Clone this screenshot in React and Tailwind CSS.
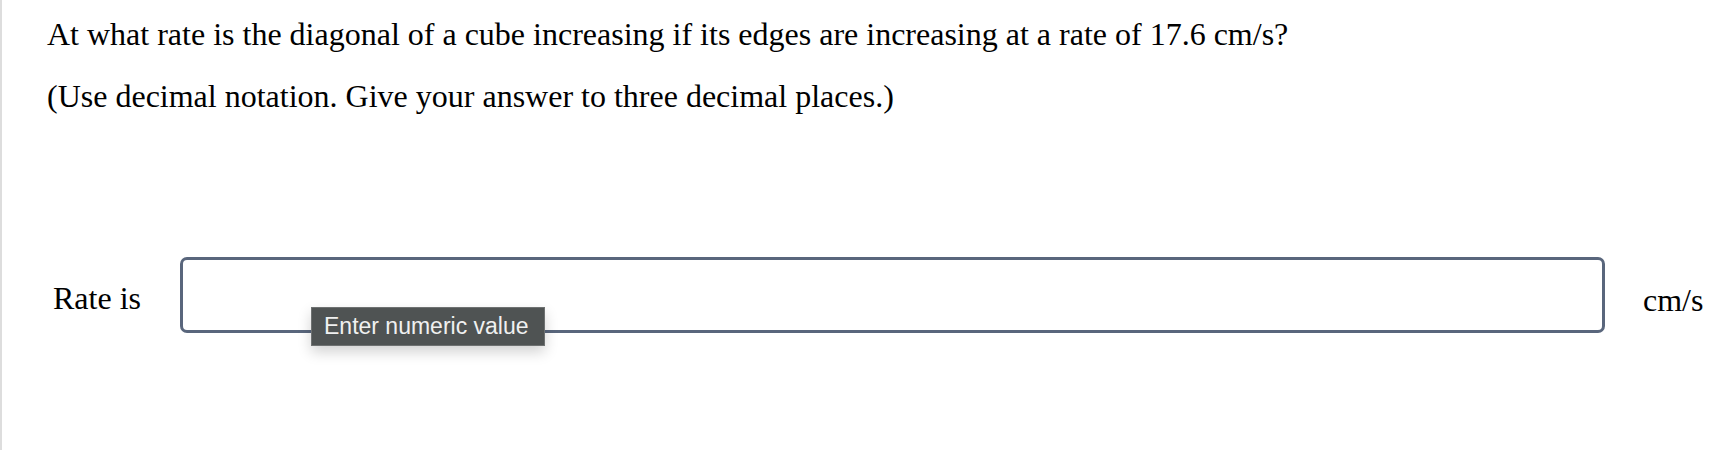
import React, { useState } from 'react';

const App = () => {
    const [rate, setRate] = useState('');

    return (
        <div className="min-h-[450px] w-[1730px] bg-white border-l-2 border-[#dddddd] font-['Liberation_Serif',serif] text-black">
            <div className="pl-[45px]">
                <p className="pt-[16px] text-[32px] leading-[1.15]">
                    At what rate is the diagonal of a cube increasing if its edges are increasing at a rate of 17.6 cm/s?
                </p>
                <p className="mt-[25px] text-[32px] leading-[1.15]">
                    (Use decimal notation. Give your answer to three decimal places.)
                </p>
            </div>

            <div className="mt-[142px] flex items-start pl-[51px]">
                <label className="w-[127px] shrink-0 pt-[23px] text-[32px] leading-[1.15]">Rate is</label>
                <div className="relative shrink-0">
                    <input
                        type="text"
                        value={rate}
                        onChange={(e) => setRate(e.target.value)}
                        className="block w-[1425px] h-[76px] rounded-[7px] border-[3px] border-[#59667c] bg-white px-3 text-[32px] focus:outline-none"
                    />
                    <div className="absolute left-[131px] top-[50px] w-[234px] h-[39px] border border-[#6e7171] bg-[#4f5353] pl-[12px] font-['Liberation_Sans',Arial,sans-serif] text-[23px] leading-[37px] text-[#f0f0f0] shadow-[0_6px_14px_rgba(0,0,0,0.18)]">
                        Enter numeric value
                    </div>
                </div>
                <span className="ml-[38px] pt-[25px] text-[32px] leading-[1.15]">cm/s</span>
            </div>
        </div>
    );
};

export default App;
